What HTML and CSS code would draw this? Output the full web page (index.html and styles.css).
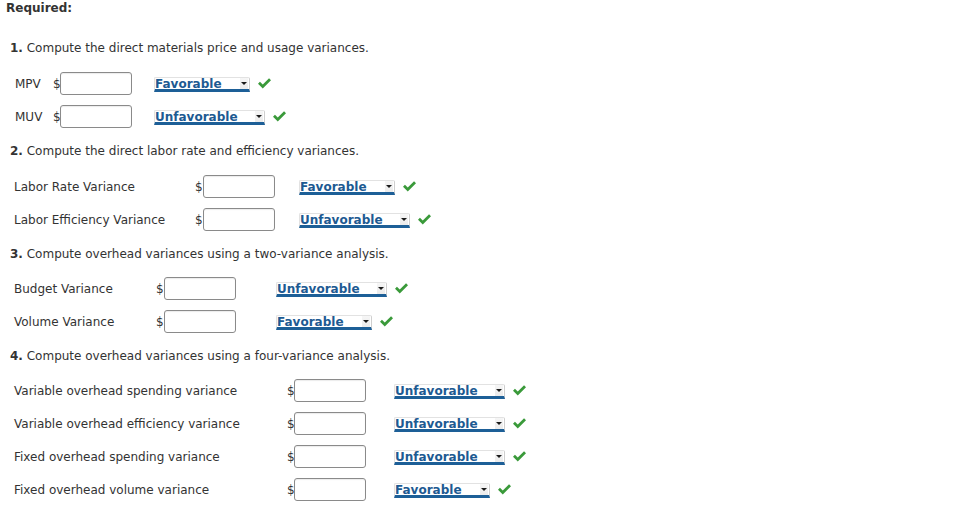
FILE: index.html
```html
<!DOCTYPE html>
<html>
<head>
<meta charset="utf-8">
<link rel="stylesheet" href="styles.css">
</head>
<body>
<div class="page">
  <div class="required">Required:</div>

  <section class="part p1">
    <p class="q"><b>1.</b> Compute the direct materials price and usage variances.</p>
    <div class="grid g1">
      <span class="label">MPV</span><span class="cur">$</span><span class="input"></span>
      <span class="pick"><span class="sel fav">Favorable<i class="arrow"></i></span><svg class="check" viewBox="0 0 12 10"><path d="M0 5.2 L1.8 3.4 L4.4 6 L10.2 0.2 L12 2 L4.4 9.6 Z"/></svg></span>
      <span class="label">MUV</span><span class="cur">$</span><span class="input"></span>
      <span class="pick"><span class="sel unf">Unfavorable<i class="arrow"></i></span><svg class="check" viewBox="0 0 12 10"><path d="M0 5.2 L1.8 3.4 L4.4 6 L10.2 0.2 L12 2 L4.4 9.6 Z"/></svg></span>
    </div>
  </section>

  <section class="part p2">
    <p class="q"><b>2.</b> Compute the direct labor rate and efficiency variances.</p>
    <div class="grid g2">
      <span class="label">Labor Rate Variance</span><span class="cur">$</span><span class="input"></span>
      <span class="pick"><span class="sel fav">Favorable<i class="arrow"></i></span><svg class="check" viewBox="0 0 12 10"><path d="M0 5.2 L1.8 3.4 L4.4 6 L10.2 0.2 L12 2 L4.4 9.6 Z"/></svg></span>
      <span class="label">Labor Efficiency Variance</span><span class="cur">$</span><span class="input"></span>
      <span class="pick"><span class="sel unf">Unfavorable<i class="arrow"></i></span><svg class="check" viewBox="0 0 12 10"><path d="M0 5.2 L1.8 3.4 L4.4 6 L10.2 0.2 L12 2 L4.4 9.6 Z"/></svg></span>
    </div>
  </section>

  <section class="part p3">
    <p class="q"><b>3.</b> Compute overhead variances using a two-variance analysis.</p>
    <div class="grid g3">
      <span class="label">Budget Variance</span><span class="cur">$</span><span class="input"></span>
      <span class="pick"><span class="sel unf">Unfavorable<i class="arrow"></i></span><svg class="check" viewBox="0 0 12 10"><path d="M0 5.2 L1.8 3.4 L4.4 6 L10.2 0.2 L12 2 L4.4 9.6 Z"/></svg></span>
      <span class="label">Volume Variance</span><span class="cur">$</span><span class="input"></span>
      <span class="pick"><span class="sel fav">Favorable<i class="arrow"></i></span><svg class="check" viewBox="0 0 12 10"><path d="M0 5.2 L1.8 3.4 L4.4 6 L10.2 0.2 L12 2 L4.4 9.6 Z"/></svg></span>
    </div>
  </section>

  <section class="part p4">
    <p class="q"><b>4.</b> Compute overhead variances using a four-variance analysis.</p>
    <div class="grid g4">
      <span class="label">Variable overhead spending variance</span><span class="cur">$</span><span class="input"></span>
      <span class="pick"><span class="sel unf">Unfavorable<i class="arrow"></i></span><svg class="check" viewBox="0 0 12 10"><path d="M0 5.2 L1.8 3.4 L4.4 6 L10.2 0.2 L12 2 L4.4 9.6 Z"/></svg></span>
      <span class="label">Variable overhead efficiency variance</span><span class="cur">$</span><span class="input"></span>
      <span class="pick"><span class="sel unf">Unfavorable<i class="arrow"></i></span><svg class="check" viewBox="0 0 12 10"><path d="M0 5.2 L1.8 3.4 L4.4 6 L10.2 0.2 L12 2 L4.4 9.6 Z"/></svg></span>
      <span class="label">Fixed overhead spending variance</span><span class="cur">$</span><span class="input"></span>
      <span class="pick"><span class="sel unf">Unfavorable<i class="arrow"></i></span><svg class="check" viewBox="0 0 12 10"><path d="M0 5.2 L1.8 3.4 L4.4 6 L10.2 0.2 L12 2 L4.4 9.6 Z"/></svg></span>
      <span class="label">Fixed overhead volume variance</span><span class="cur">$</span><span class="input"></span>
      <span class="pick"><span class="sel fav">Favorable<i class="arrow"></i></span><svg class="check" viewBox="0 0 12 10"><path d="M0 5.2 L1.8 3.4 L4.4 6 L10.2 0.2 L12 2 L4.4 9.6 Z"/></svg></span>
    </div>
  </section>
</div>
</body>
</html>
```

FILE: styles.css
```css
html, body {
  margin: 0;
  padding: 0;
  background: #ffffff;
}
body {
  font-family: "DejaVu Sans", Verdana, sans-serif;
  font-size: 12px;
  color: #333333;
}
.page {
  padding: 0 0 0 6px;
}
.required {
  font-weight: bold;
  line-height: 16px;
  height: 16px;
  margin-bottom: 24px;
}
.part {
  padding-left: 4px;
  margin-bottom: 15px;
}
.q {
  margin: 0 0 16px 0;
  line-height: 16px;
}
.p3 .q, .p4 .q { margin-bottom: 15px; }
.q b {
  font-weight: bold;
}
.grid {
  display: grid;
  align-items: center;
  row-gap: 10px;
  padding-left: 4px;
}
.g1 { grid-template-columns: 38px 7px 72px auto; padding-left: 5px; }
.g2 { grid-template-columns: 181px 8px 72px auto; }
.g3 { grid-template-columns: 142px 8px 72px auto; }
.g4 { grid-template-columns: 273px 7px 73px auto; }
.g1 .pick { margin-left: 22px; }
.g2 .pick { margin-left: 24px; }
.g3 .pick { margin-left: 40px; }
.g4 .pick { margin-left: 27px; }

.label {
  line-height: 16px;
}
.cur {
  line-height: 16px;
}
.input {
  box-sizing: border-box;
  height: 23px;
  width: 72px;
  border: 1px solid #8a8a8a;
  border-radius: 3px;
  background: #fff;
  box-shadow: inset 0 1px 1px rgba(0,0,0,0.08);
}
.pick {
  display: flex;
  align-items: center;
}
.sel {
  position: relative;
  box-sizing: border-box;
  height: 15px;
  padding-left: 0;
  font-weight: bold;
  color: #1d5a92;
  line-height: 12px;
  border: 1px solid #e2e2e2;
  border-right-color: #cfcfcf;
  border-bottom: 3px solid #1d5f97;
  border-radius: 2px 2px 0 0;
  background: #fff;
  margin-top: 1px;
}
.sel.fav { width: 96px; }
.sel.unf { width: 111px; }
.arrow {
  position: absolute;
  right: 1px;
  top: 0;
  width: 8px;
  height: 11px;
  background: linear-gradient(#f6f6f6, #ebebeb);
}
.arrow::after {
  content: "";
  position: absolute;
  left: 1px;
  top: 4px;
  width: 0;
  height: 0;
  border-left: 3px solid transparent;
  border-right: 3px solid transparent;
  border-top: 3px solid #1a1a1a;
}
.check {
  width: 13px;
  height: 11px;
  margin-left: 8px;
  margin-top: -1px;
  fill: #3a9a3a;
}
```
